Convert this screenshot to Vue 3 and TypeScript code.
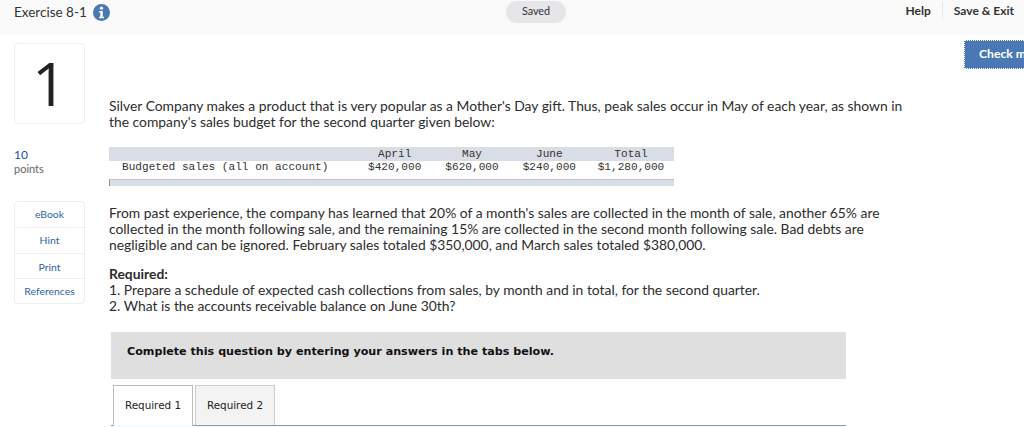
<template>
  <div class="page">
    <header class="topbar">
      <div class="title">
        <span>Exercise 8-1</span>
        <svg class="info" viewBox="0 0 16 16" width="17" height="17">
          <circle cx="8" cy="8" r="8" fill="#4a78b5" />
          <circle cx="8" cy="3.9" r="1.5" fill="#fff" />
          <path d="M5.8 6.6h3.4v5.3h1.2v1.5H5.7v-1.5h1.2V8.1H5.8z" fill="#fff" />
        </svg>
      </div>
      <div class="saved">Saved</div>
      <nav class="actions">
        <a class="help">Help</a>
        <a class="exit">Save &amp; Exit</a>
      </nav>
    </header>

    <div class="body">
      <aside class="side">
        <div class="number">1</div>
        <div class="points">
          <div class="points-value">10</div>
          <div class="points-label">points</div>
        </div>
        <ul class="tools">
          <li v-for="tool in tools" :key="tool">{{ tool }}</li>
        </ul>
      </aside>

      <main class="content">
        <p class="intro">
          Silver Company makes a product that is very popular as a Mother's Day gift. Thus, peak sales occur in May of each year, as shown in the company's sales budget for the second quarter given below:
        </p>

        <table class="budget">
          <thead>
            <tr>
              <th class="label-col"></th>
              <th v-for="col in columns" :key="col.name">{{ col.name }}</th>
            </tr>
          </thead>
          <tbody>
            <tr>
              <td class="label-col">Budgeted sales (all on account)</td>
              <td v-for="col in columns" :key="col.name">{{ col.value }}</td>
            </tr>
          </tbody>
        </table>
        <div class="budget-foot"></div>

        <p class="para">
          From past experience, the company has learned that 20% of a month's sales are collected in the month of sale, another 65% are collected in the month following sale, and the remaining 15% are collected in the second month following sale. Bad debts are negligible and can be ignored. February sales totaled $350,000, and March sales totaled $380,000.
        </p>

        <div class="required">
          <strong>Required:</strong>
          <div>1. Prepare a schedule of expected cash collections from sales, by month and in total, for the second quarter.</div>
          <div>2. What is the accounts receivable balance on June 30th?</div>
        </div>

        <div class="notice">Complete this question by entering your answers in the tabs below.</div>

        <div class="tabs">
          <div class="tab active">Required 1</div>
          <div class="tab">Required 2</div>
        </div>
        <div class="tab-panel"></div>
      </main>

      <div class="check-col">
        <button class="check">Check my work</button>
      </div>
    </div>
  </div>
</template>

<script setup lang="ts">
const tools: string[] = ['eBook', 'Hint', 'Print', 'References'];

const columns: { name: string; value: string }[] = [
  { name: 'April', value: '$420,000' },
  { name: 'May', value: '$620,000' },
  { name: 'June', value: '$240,000' },
  { name: 'Total', value: '$1,280,000' },
];
</script>

<style>
html,
body {
  margin: 0;
  background: #fff;
}
</style>

<style scoped>
.page {
  width: 1024px;
  height: 427px;
  overflow: hidden;
  font-family: Lato, "Open Sans", sans-serif;
  color: #2d2d2d;
}

.topbar {
  height: 34px;
  background: #fafafa;
  display: grid;
  grid-template-columns: 492px 60px 1fr;
  align-items: center;
  padding: 0 10px 0 14px;
  box-sizing: border-box;
}

.title {
  display: flex;
  align-items: center;
  gap: 6px;
  font-size: 13.5px;
  color: #333;
  padding-bottom: 10px;
}

.info {
  display: block;
}

.saved {
  width: 60px;
  height: 22px;
  margin-top: -10px;
  border-radius: 11px;
  background: #e6e5e8;
  font-size: 10.8px;
  line-height: 20px;
  text-align: center;
  color: #333;
}

.actions {
  justify-self: end;
  display: flex;
  align-items: center;
  font-size: 12px;
  font-weight: 700;
  color: #333;
  padding-bottom: 13px;
}

.help {
  padding-right: 11px;
  border-right: 1px solid #e6e6e6;
  line-height: 17px;
}

.exit {
  padding-left: 11px;
}

.body {
  display: flex;
}

.side {
  width: 71px;
  margin-left: 14px;
  flex: none;
}

.number {
  margin-top: 9px;
  height: 81px;
  box-sizing: border-box;
  border: 1px solid #eee;
  border-radius: 4px;
  font-family: "Open Sans", sans-serif;
  font-size: 61px;
  font-weight: 500;
  line-height: 77px;
  text-align: center;
  color: #222;
}

.points {
  margin-top: 23px;
}

.points-value {
  font-size: 12px;
  line-height: 15px;
  color: #1d4f8f;
}

.points-label {
  font-size: 11px;
  line-height: 14px;
  color: #666;
}

.tools {
  list-style: none;
  margin: 25px 0 0;
  padding: 0;
  border: 1px solid #eee;
  border-radius: 4px;
}

.tools li {
  height: 26px;
  line-height: 25px;
  font-size: 10.4px;
  text-align: center;
  color: #2c63a8;
  border-bottom: 1px solid #f0f0f0;
  box-sizing: border-box;
}

.tools li:nth-child(3) {
  height: 25px;
  line-height: 26px;
}

.tools li:last-child {
  height: 24px;
  line-height: 24px;
  border-bottom: 0;
}

.content {
  width: 800px;
  margin-left: 24px;
  flex: none;
  font-size: 13.87px;
  line-height: 16px;
}

.intro {
  margin: 64px 0 0;
}

.budget {
  margin-top: 17px;
  width: 565px;
  border-collapse: collapse;
  font-family: "Liberation Mono", monospace;
  font-size: 11.1px;
  line-height: 13px;
  table-layout: fixed;
  color: #333;
}

.budget th {
  background: #d9dee6;
  font-weight: 400;
  text-align: center;
  padding: 1px 0 0;
  height: 13px;
}

.budget td {
  text-align: center;
  padding: 0;
  height: 18px;
  vertical-align: top;
}

.budget th:last-child,
.budget td:last-child {
  width: 86px;
}

.budget .label-col {
  width: 247px;
  text-align: left;
  padding-left: 13px;
  box-sizing: border-box;
}

.budget-foot {
  width: 565px;
  height: 7px;
  background: #d9dee6;
  border-top: 1px solid #bfc3c9;
  border-left: 1px solid #8d9198;
  box-sizing: border-box;
}

.para {
  margin: 19px 0 0;
}

.required {
  margin-top: 13px;
}

.notice {
  margin: 18px 0 0 2px;
  width: 735px;
  height: 47px;
  box-sizing: border-box;
  background: #dfdfdf;
  padding-left: 16px;
  font-family: "DejaVu Sans", Verdana, sans-serif;
  font-size: 11.15px;
  font-weight: 700;
  line-height: 39px;
  color: #111;
}

.tabs {
  display: flex;
  gap: 2px;
  margin: 6px 0 0 2px;
  width: 735px;
  border-bottom: 1px solid #8f9aa8;
  padding-left: 2px;
  box-sizing: border-box;
  font-family: "DejaVu Sans", Verdana, sans-serif;
  font-size: 10.4px;
}

.tab {
  width: 80px;
  height: 40px;
  box-sizing: border-box;
  border: 1px solid #ccc;
  border-bottom: 0;
  background: #f3f3f3;
  line-height: 38px;
  text-align: center;
  color: #222;
}

.tab.active {
  height: 41px;
  margin-bottom: -1px;
  background: #fff;
  border-color: #bbb;
}

.tab-panel {
  margin-left: 2px;
  width: 735px;
  height: 10px;
  background: #f3f6fa;
}

.check-col {
  flex: none;
  margin-left: 55px;
  padding-top: 6px;
}

.check {
  display: block;
  width: 110px;
  height: 29px;
  padding: 0 0 2px 14px;
  text-align: left;
  background: #4a78b5;
  border: 1px dotted #fff;
  color: #fff;
  font-family: Lato, sans-serif;
  font-size: 12.2px;
  font-weight: 700;
}
</style>
